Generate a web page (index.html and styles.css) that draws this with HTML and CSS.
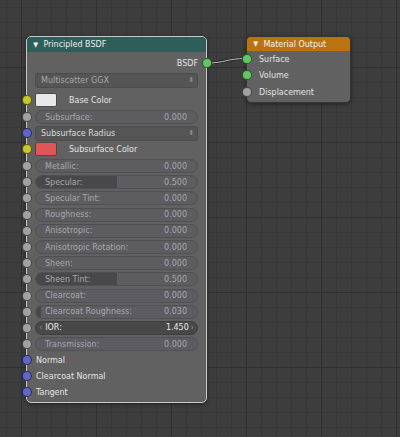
FILE: index.html
```html
<!DOCTYPE html>
<html>
<head>
<meta charset="utf-8">
<link rel="stylesheet" href="styles.css">
</head>
<body>
<div class="canvas">
  <svg class="link" width="400" height="437" viewBox="0 0 400 437">
    <path d="M206.5 63 C226 63 226 58.5 246 58.5" stroke="#1e1e1e" stroke-width="2.6" fill="none"/>
    <path d="M206.5 63 C226 63 226 58.5 246 58.5" stroke="#c8c8c8" stroke-width="1" fill="none"/>
  </svg>

  <div class="node bsdf">
    <div class="header teal"><span class="tri">▼</span>Principled BSDF</div>
    <div class="row out"><span>BSDF</span><i class="sock r green"></i></div>
    <div class="row dd-row"><div class="dropdown"><span>Multiscatter GGX</span><span class="arr">⬍</span></div></div>
    <div class="row color-row"><i class="sock yellow"></i><div class="swatch white"></div><span class="lbl">Base Color</span></div>
    <div class="row tight"><i class="sock grey"></i><div class="field"><span>Subsurface:</span><span>0.000</span></div></div>
    <div class="row tight"><i class="sock purple"></i><div class="dropdown"><span class="bright">Subsurface Radius</span><span class="arr">⬍</span></div></div>
    <div class="row tight"><i class="sock yellow"></i><div class="swatch red"></div><span class="lbl">Subsurface Color</span></div>
    <div class="list">
      <div class="row s"><i class="sock grey"></i><div class="field"><span>Metallic:</span><span>0.000</span></div></div>
      <div class="row s"><i class="sock grey"></i><div class="field"><div class="fill" style="width:50%"></div><span>Specular:</span><span>0.500</span></div></div>
      <div class="row s"><i class="sock grey"></i><div class="field"><span>Specular Tint:</span><span>0.000</span></div></div>
      <div class="row s"><i class="sock grey"></i><div class="field"><span>Roughness:</span><span>0.000</span></div></div>
      <div class="row s"><i class="sock grey"></i><div class="field"><span>Anisotropic:</span><span>0.000</span></div></div>
      <div class="row s"><i class="sock grey"></i><div class="field"><span>Anisotropic Rotation:</span><span>0.000</span></div></div>
      <div class="row s"><i class="sock grey"></i><div class="field"><span>Sheen:</span><span>0.000</span></div></div>
      <div class="row s"><i class="sock grey"></i><div class="field"><div class="fill" style="width:50%"></div><span>Sheen Tint:</span><span>0.500</span></div></div>
      <div class="row s"><i class="sock grey"></i><div class="field"><span>Clearcoat:</span><span>0.000</span></div></div>
      <div class="row s"><i class="sock grey"></i><div class="field"><div class="fill" style="width:3%"></div><span>Clearcoat Roughness:</span><span>0.030</span></div></div>
      <div class="row s"><i class="sock grey"></i><div class="field num"><span class="na">‹</span><span>IOR:</span><span>1.450</span><span class="na">›</span></div></div>
      <div class="row s"><i class="sock grey"></i><div class="field"><span>Transmission:</span><span>0.000</span></div></div>
    </div>
    <div class="row plain"><i class="sock purple"></i><span class="lbl0">Normal</span></div>
    <div class="row plain"><i class="sock purple"></i><span class="lbl0">Clearcoat Normal</span></div>
    <div class="row plain"><i class="sock purple"></i><span class="lbl0">Tangent</span></div>
  </div>

  <div class="node output">
    <div class="header orange"><span class="tri">▼</span>Material Output</div>
    <div class="row in"><i class="sock green"></i><span>Surface</span></div>
    <div class="row in"><i class="sock green"></i><span>Volume</span></div>
    <div class="row in d"><i class="sock grey"></i><span>Displacement</span></div>
  </div>
</div>
</body>
</html>
```

FILE: styles.css
```css
html, body {
  margin: 0;
  padding: 0;
}
body {
  width: 400px;
  height: 437px;
  overflow: hidden;
  font-family: "DejaVu Sans", "Liberation Sans", sans-serif;
  font-size: 8px;
  color: #e2e2e2;
}
.canvas {
  position: relative;
  width: 400px;
  height: 437px;
  background-color: #3d3d3d;
  background-image:
    linear-gradient(to right, #303030 1px, transparent 1px),
    linear-gradient(to bottom, #303030 1px, transparent 1px),
    linear-gradient(to right, #383838 1px, transparent 1px),
    linear-gradient(to bottom, #383838 1px, transparent 1px);
  background-size: 75px 75px, 75px 75px, 15px 15px, 15px 15px;
  background-position: 21px 0, 0 67px, 6px 0, 0 7px;
}
.link {
  position: absolute;
  left: 0;
  top: 0;
  z-index: 2;
  pointer-events: none;
}
.node {
  position: absolute;
  box-sizing: border-box;
  background: #616161;
  border-radius: 5px;
  box-shadow: 0 1px 4px rgba(0,0,0,0.45);
}
.bsdf {
  left: 26px;
  top: 36px;
  width: 181px;
  height: 367px;
  border: 1px solid #c9c9c9;
}
.output {
  left: 246px;
  top: 36px;
  width: 105px;
  height: 67px;
  border: 1px solid #353535;
}
.header {
  height: 14px;
  display: flex;
  align-items: center;
  padding-left: 6px;
  border-radius: 4px 4px 0 0;
  color: #ececec;
  font-size: 8px;
}
.bsdf .header { height: 15px; }
.teal { background: #2f5e5a; }
.orange { background: #bb730f; color: #f4f4f4; }
.tri {
  font-size: 7px;
  margin-right: 5px;
  display: inline-block;
  transform: scaleX(0.9);
}
.row {
  position: relative;
  height: 16px;
  display: flex;
  align-items: center;
  padding: 0 8px;
}
.out {
  justify-content: flex-end;
  margin-top: 3px;
  padding-right: 8px;
  color: #e6e6e6;
}
.dd-row { margin-top: 1px; }
.color-row { margin-top: 4px; }
.tight { height: 16px; }
.color-row + .tight { margin-top: 1px; }
.list { margin-top: 1px; }
.s { height: 16.2px; }
.plain { height: 16px; }
.sock {
  position: absolute;
  left: -5px;
  top: 50%;
  width: 8px;
  height: 8px;
  margin-top: -5px;
  border-radius: 50%;
  border: 1px solid rgba(0,0,0,0.55);
  z-index: 3;
}
.sock.r {
  left: auto;
  right: -5.5px;
}
.green { background: #63c763; }
.yellow { background: #c7c729; }
.grey { background: #a1a1a1; }
.purple { background: #6363c7; }
.dropdown {
  flex: 1;
  height: 15px;
  box-sizing: border-box;
  background: #555555;
  border: 1px solid #4c4c4c;
  border-radius: 3px;
  display: flex;
  align-items: center;
  justify-content: space-between;
  padding: 0 3px 0 5px;
  color: #a8a8a8;
}
.dropdown .bright { color: #dcdcdc; }
.arr {
  font-size: 7px;
  color: #8c8c8c;
}
.swatch {
  width: 22px;
  height: 14px;
  border-radius: 2px;
  box-sizing: border-box;
  border: 1px solid #4a4a4a;
}
.white { background: #e8e8e8; }
.red { background: #e05555; }
.lbl {
  margin-left: 12px;
  color: #e4e4e4;
}
.lbl0 {
  color: #e4e4e4;
  margin-left: 1px;
}
.field {
  position: relative;
  flex: 1;
  height: 14px;
  box-sizing: border-box;
  border-radius: 7px;
  background: #5c5c61;
  border: 1px solid #505054;
  display: flex;
  align-items: center;
  justify-content: space-between;
  padding: 0 10px 0 9px;
  color: #a8a8ac;
  overflow: hidden;
}
.field span { position: relative; }
.fill {
  position: absolute;
  left: 0;
  top: 0;
  bottom: 0;
  background: #48484a;
}
.field.num {
  background: #484848;
  border-color: #3e3e3e;
  color: #e8e8e8;
  padding: 0 3px 0 3px;
}
.field.num span:nth-child(2) {
  flex: 1;
  margin-left: 3px;
}
.field.num span:nth-child(3) {
  margin-right: 2px;
}
.na {
  color: #8a8a8a;
  font-size: 8px;
}
.in {
  padding-left: 12px;
  color: #e4e4e4;
}
.in .sock { left: -5px; }
.d { margin-top: 1px; }
```
